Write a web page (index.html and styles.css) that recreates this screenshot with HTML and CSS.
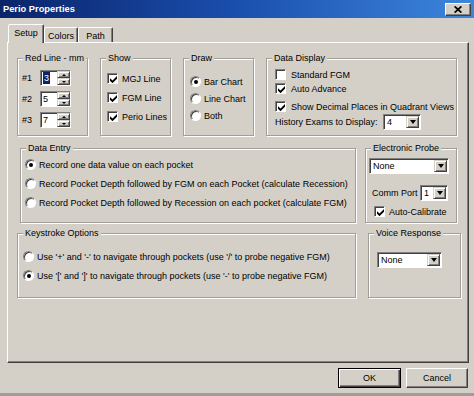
FILE: index.html
```html
<!DOCTYPE html>
<html lang="en">
  <head>
    <meta charset="utf-8">
    <title>Perio Properties</title>
    <link rel="stylesheet" href="styles.css">
  </head>
  <body>
    <div class="window">
      <div class="titlebar">
        <span class="title">Perio Properties</span>
        <span class="close">
          <svg width="8" height="7" viewBox="0 0 8 7"><path d="M0.6 0.4 L7.4 6.6 M7.4 0.4 L0.6 6.6" stroke="#000" stroke-width="1.8" fill="none"/></svg>
        </span>
      </div>
      <div class="content">
        <div class="tabs">
          <div class="tab active">Setup</div>
          <div class="tab">Colors</div>
          <div class="tab tab-last">Path</div>
        </div>
        <div class="panel">
          <div class="row row-top">
            <fieldset class="group redline">
              <legend>Red Line - mm</legend>
              <div class="group-body redline-body">
                <div class="spin-row">
                  <span class="spin-label">#1</span>
                  <span class="spin">
                    <span class="spin-val"><span class="sel">3</span></span>
                    <span class="spin-btns"><span class="spin-btn"><i class="arrow-up"></i></span><span class="spin-btn"><i class="arrow-dn"></i></span></span>
                  </span>
                </div>
                <div class="spin-row">
                  <span class="spin-label">#2</span>
                  <span class="spin">
                    <span class="spin-val">5</span>
                    <span class="spin-btns"><span class="spin-btn"><i class="arrow-up"></i></span><span class="spin-btn"><i class="arrow-dn"></i></span></span>
                  </span>
                </div>
                <div class="spin-row">
                  <span class="spin-label">#3</span>
                  <span class="spin">
                    <span class="spin-val">7</span>
                    <span class="spin-btns"><span class="spin-btn"><i class="arrow-up"></i></span><span class="spin-btn"><i class="arrow-dn"></i></span></span>
                  </span>
                </div>
              </div>
            </fieldset>

            <fieldset class="group show">
              <legend>Show</legend>
              <div class="group-body show-body">
                <div class="opt"><span class="check"><svg width="7" height="7" viewBox="0 0 7 7"><polygon points="0,2.2 2.5,4.6 7,0 7,2.8 2.5,7.2 0,4.8"/></svg></span>MGJ Line</div>
                <div class="opt"><span class="check"><svg width="7" height="7" viewBox="0 0 7 7"><polygon points="0,2.2 2.5,4.6 7,0 7,2.8 2.5,7.2 0,4.8"/></svg></span>FGM Line</div>
                <div class="opt"><span class="check"><svg width="7" height="7" viewBox="0 0 7 7"><polygon points="0,2.2 2.5,4.6 7,0 7,2.8 2.5,7.2 0,4.8"/></svg></span>Perio Lines</div>
              </div>
            </fieldset>

            <fieldset class="group draw">
              <legend>Draw</legend>
              <div class="group-body draw-body">
                <div class="opt"><span class="radio on"></span>Bar Chart</div>
                <div class="opt"><span class="radio"></span>Line Chart</div>
                <div class="opt"><span class="radio"></span>Both</div>
              </div>
            </fieldset>

            <fieldset class="group display">
              <legend>Data Display</legend>
              <div class="group-body display-body">
                <div class="opt"><span class="check"></span>Standard FGM</div>
                <div class="opt"><span class="check"><svg width="7" height="7" viewBox="0 0 7 7"><polygon points="0,2.2 2.5,4.6 7,0 7,2.8 2.5,7.2 0,4.8"/></svg></span>Auto Advance</div>
                <div class="opt opt-spaced"><span class="check"><svg width="7" height="7" viewBox="0 0 7 7"><polygon points="0,2.2 2.5,4.6 7,0 7,2.8 2.5,7.2 0,4.8"/></svg></span>Show Decimal Places in Quadrant Views</div>
                <div class="field-row">
                  <span class="history-label">History Exams to Display:</span>
                  <span class="combo history-combo"><span class="combo-text">4</span><span class="combo-btn"><i class="arrow-dn big"></i></span></span>
                </div>
              </div>
            </fieldset>
          </div>

          <div class="row row-mid">
            <fieldset class="group entry">
              <legend>Data Entry</legend>
              <div class="group-body entry-body">
                <div class="opt"><span class="radio on"></span>Record one data value on each pocket</div>
                <div class="opt"><span class="radio"></span>Record Pocket Depth followed by FGM on each Pocket (calculate Recession)</div>
                <div class="opt"><span class="radio"></span>Record Pocket Depth followed by Recession on each pocket (calculate FGM)</div>
              </div>
            </fieldset>

            <fieldset class="group probe">
              <legend>Electronic Probe</legend>
              <div class="group-body probe-body">
                <span class="combo probe-combo"><span class="combo-text">None</span><span class="combo-btn"><i class="arrow-dn big"></i></span></span>
                <div class="field-row comm-row">
                  <span class="comm-label">Comm Port</span>
                  <span class="combo comm-combo"><span class="combo-text">1</span><span class="combo-btn"><i class="arrow-dn big"></i></span></span>
                </div>
                <div class="opt calibrate"><span class="check"><svg width="7" height="7" viewBox="0 0 7 7"><polygon points="0,2.2 2.5,4.6 7,0 7,2.8 2.5,7.2 0,4.8"/></svg></span>Auto-Calibrate</div>
              </div>
            </fieldset>
          </div>

          <div class="row row-bottom">
            <fieldset class="group keys">
              <legend>Keystroke Options</legend>
              <div class="group-body keys-body">
                <div class="opt"><span class="radio"></span>Use '+' and '-' to navigate through pockets (use '/' to probe negative FGM)</div>
                <div class="opt"><span class="radio on"></span>Use '[' and ']' to navigate through pockets (use '-' to probe negative FGM)</div>
              </div>
            </fieldset>

            <fieldset class="group voice">
              <legend>Voice Response</legend>
              <div class="group-body voice-body">
                <span class="combo voice-combo"><span class="combo-text">None</span><span class="combo-btn"><i class="arrow-dn big"></i></span></span>
              </div>
            </fieldset>
          </div>
        </div>

        <div class="buttons">
          <span class="btn btn-default">OK</span>
          <span class="btn">Cancel</span>
        </div>
      </div>
    </div>
  </body>
</html>
```

FILE: styles.css
```css
body {
  margin: 0;
  font-family: "Liberation Sans", Arial, sans-serif;
  font-size: 9px;
  color: #000;
  white-space: nowrap;
}

.window {
  width: 474px;
  height: 396px;
  box-sizing: border-box;
  background: #d4d0c8;
  border-bottom: 3px solid #9f9d97;
  display: flex;
  flex-direction: column;
  overflow: hidden;
}

/* title bar */
.titlebar {
  height: 18px;
  flex: none;
  display: flex;
  align-items: center;
  padding: 0 3px;
  background: linear-gradient(90deg, #0a246a 0%, #1a4fae 50%, #3d86dc 100%);
}

.title {
  color: #fff;
  font-weight: bold;
  font-size: 9.3px;
}

.close {
  margin-left: auto;
  width: 26px;
  height: 13px;
  box-sizing: border-box;
  display: flex;
  align-items: center;
  justify-content: center;
  background: #d4d0c8;
  border: 1px solid;
  border-color: #fff #404040 #404040 #fff;
  box-shadow: inset -1px -1px #808080;
}

.content {
  flex: 1;
  padding: 6px 5px 0 7px;
  display: flex;
  flex-direction: column;
}

/* tabs */
.tabs {
  display: flex;
  align-items: flex-end;
  height: 19px;
  padding-left: 1px;
}

.tab {
  width: 34px;
  height: 16px;
  box-sizing: border-box;
  display: flex;
  align-items: center;
  justify-content: center;
  background: #d4d0c8;
  border: 1px solid;
  border-bottom: none;
  border-color: #fff #404040 transparent #fff;
  border-radius: 2px 2px 0 0;
  box-shadow: inset -1px 0 #808080;
}

.tab-last {
  width: 35px;
}

.tab.active {
  width: 36px;
  height: 19px;
  padding-bottom: 2px;
  position: relative;
  z-index: 1;
}

.panel {
  height: 321px;
  box-sizing: border-box;
  margin-top: -1px;
  border: 1px solid;
  border-color: #fff #404040 #404040 #fff;
  box-shadow: inset -1px -1px #808080;
}

/* group boxes */
.row {
  display: flex;
  align-items: stretch;
}

.row-top {
  margin-top: 9px;
  height: 84px;
  padding-left: 9px;
  gap: 12px;
}

.row-mid {
  margin-top: 6px;
  height: 81px;
  padding-left: 12px;
  gap: 9px;
}

.row-bottom {
  margin-top: 4px;
  height: 71px;
  padding-left: 9px;
  gap: 12px;
}

.group {
  margin: 0;
  padding: 0;
  min-width: 0;
  box-sizing: border-box;
  border: 1px solid #a19f99;
  box-shadow: inset 1px 1px #fff, 1px 1px #fff;
}

.group legend {
  margin-left: 5px;
  padding: 0 2px;
  line-height: 12px;
  background: #d4d0c8;
}

.redline { width: 71px; }
.show { width: 71px; }
.draw { width: 71px; }
.display { width: 191px; }
.entry { width: 336px; }
.probe { width: 92px; }
.keys { width: 339px; }
.voice { width: 93px; }

.group-body {
  display: flex;
  flex-direction: column;
  align-items: flex-start;
}

.redline-body { padding: 6px 0 0 4px; gap: 5px; }
.show-body { padding: 8px 0 0 6px; gap: 6px; }
.draw-body { padding: 11px 0 0 6px; gap: 4px; }
.display-body { padding: 4px 0 0 8px; gap: 1px; }
.entry-body { padding: 4px 0 0 4px; gap: 6px; }
.probe-body { padding: 4px 0 0 3px; }
.keys-body { padding: 11px 0 0 5px; gap: 6px; }
.voice-body { padding: 13px 0 0 8px; }

/* options */
.opt {
  display: flex;
  align-items: center;
  height: 13px;
}

.opt-spaced {
  margin-top: 4px;
}

.check {
  flex: none;
  width: 11px;
  height: 11px;
  box-sizing: border-box;
  margin-right: 4px;
  display: flex;
  align-items: center;
  justify-content: center;
  background: #fff;
  border: 1px solid;
  border-color: #808080 #fff #fff #808080;
  box-shadow: inset 1px 1px #404040;
}

.check svg {
  margin: 1px 0 0 1px;
}

.display-body .check {
  margin-right: 5px;
}

.radio {
  flex: none;
  width: 11px;
  height: 11px;
  box-sizing: border-box;
  margin-right: 3px;
  display: flex;
  align-items: center;
  justify-content: center;
  border-radius: 50%;
  background: #fff;
  border: 1px solid;
  border-color: #808080 #fff #fff #808080;
  box-shadow: inset 1px 1px #404040;
}

.radio.on::after {
  content: "";
  width: 4px;
  height: 4px;
  border-radius: 50%;
  background: #000;
}

/* spinners */
.spin-row {
  display: flex;
  align-items: center;
  height: 16px;
}

.spin-label {
  width: 18px;
}

.spin {
  width: 31px;
  height: 16px;
  box-sizing: border-box;
  display: flex;
  background: #fff;
  border: 1px solid;
  border-color: #808080 #fff #fff #808080;
  box-shadow: inset 1px 1px #404040;
}

.spin-val {
  flex: 1;
  padding: 1px 0 0 2px;
  line-height: 12px;
}

.sel {
  display: inline-block;
  padding: 0 1px;
  background: #0a246a;
  color: #fff;
}

.spin-btns {
  width: 13px;
  display: flex;
  flex-direction: column;
}

.spin-btn {
  height: 7px;
  box-sizing: border-box;
  display: flex;
  align-items: center;
  justify-content: center;
  background: #d4d0c8;
  border: 1px solid;
  border-color: #d4d0c8 #404040 #404040 #d4d0c8;
  box-shadow: inset 1px 1px #fff, inset -1px -1px #808080;
}

.arrow-up {
  width: 0;
  height: 0;
  border-left: 2px solid transparent;
  border-right: 2px solid transparent;
  border-bottom: 2px solid #000;
}

.arrow-dn {
  width: 0;
  height: 0;
  border-left: 2px solid transparent;
  border-right: 2px solid transparent;
  border-top: 2px solid #000;
}

.arrow-dn.big {
  border-left-width: 3.5px;
  border-right-width: 3.5px;
  border-top-width: 4px;
}

/* combos */
.field-row {
  display: flex;
  align-items: center;
}

.combo {
  height: 16px;
  box-sizing: border-box;
  display: flex;
  background: #fff;
  border: 1px solid;
  border-color: #808080 #fff #fff #808080;
  box-shadow: inset 1px 1px #404040;
}

.combo-text {
  flex: 1;
  padding: 1px 0 0 3px;
  line-height: 13px;
}

.combo-btn {
  width: 13px;
  margin: 1px 1px 1px 0;
  box-sizing: border-box;
  display: flex;
  align-items: center;
  justify-content: center;
  background: #d4d0c8;
  border: 1px solid;
  border-color: #d4d0c8 #404040 #404040 #d4d0c8;
  box-shadow: inset 1px 1px #fff, inset -1px -1px #808080;
}

.history-label { width: 108px; }
.history-combo { width: 38px; }
.probe-combo { width: 80px; }
.comm-row { margin-top: 11px; }
.comm-label { width: 48px; padding-left: 3px; }
.comm-combo { width: 28px; }
.calibrate { margin: 4px 0 0 5px; }
.voice-combo { width: 65px; }

/* dialog buttons */
.buttons {
  display: flex;
  justify-content: flex-end;
  gap: 5px;
  margin-top: 5px;
  padding-right: 1px;
}

.btn {
  width: 62px;
  height: 20px;
  box-sizing: border-box;
  display: flex;
  align-items: center;
  justify-content: center;
  background: #d4d0c8;
  border: 1px solid;
  border-color: #fff #404040 #404040 #fff;
  box-shadow: inset -1px -1px #808080;
}

.btn-default {
  width: 63px;
  border-color: #000;
  box-shadow: inset 1px 1px #fff, inset -1px -1px #404040, inset -2px -2px #808080;
}
```
